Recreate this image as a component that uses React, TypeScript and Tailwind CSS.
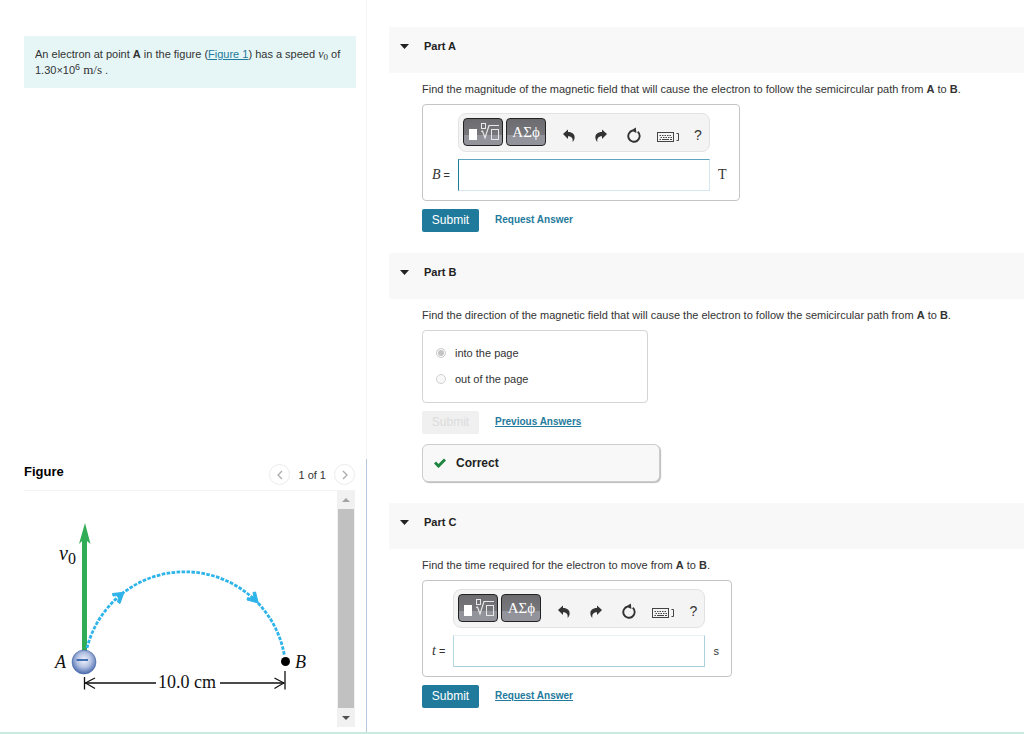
import type { ReactNode } from "react";

const serif = "font-['Liberation_Serif',serif]";

const UndoIcon = ({ flip = false }: { flip?: boolean }) => (
  <svg
    viewBox="0 0 12 13"
    className={flip ? "h-[13px] w-3 -scale-x-100" : "h-[13px] w-3"}
    fill="#333"
  >
    <path d="M0 5 L5 0.5 V3 C9.5 3 12 5.5 11.6 9 C11.4 10.8 10.6 12 9.6 13 C10.2 9.8 9 7.3 5 7.3 V10 Z" />
  </svg>
);

const ResetIcon = () => (
  <svg viewBox="0 0 14 16" className="h-4 w-[14px]">
    <path
      d="M9.6 4 A5.7 5.7 0 1 1 4.4 4"
      fill="none"
      stroke="#333"
      strokeWidth="1.9"
      transform="rotate(14 7 9)"
    />
    <path d="M4.2 3.6 L8.8 0.4 L9.4 6 Z" fill="#333" />
  </svg>
);

const KeyboardIcon = () => (
  <svg viewBox="0 0 24 12" className="h-3 w-6" fill="none" stroke="#444">
    <rect x="0.5" y="1.5" width="16" height="9" />
    <path d="M2.5 4.5 H15 M3.5 6.5 H15" strokeDasharray="1.5 1" />
    <path d="M2.5 8.5 H4 M5 8.5 H12 M13 8.5 H15" />
    <path d="M19.5 2.5 H21.5 V9.5 H19.5" />
  </svg>
);

const TemplateIcon = () => (
  <svg viewBox="0 0 32 20" className="h-5 w-8" fill="none" stroke="#e8e8e8">
    <rect x="2" y="7" width="8" height="11" fill="#fff" stroke="none" />
    <rect x="14.5" y="1.5" width="4" height="5" />
    <path d="M14 9.5 L15.5 9 L18 16 L22 3.5 H32" strokeWidth="1.2" />
    <rect x="24.5" y="7.5" width="7" height="10" />
  </svg>
);

const toolButton =
  "flex h-7 w-10 items-center justify-center rounded border border-[#222] bg-linear-to-b from-[#6c6c70] from-0% via-[#77777c] via-60% to-[#93939c] to-62% text-white";

const Toolbar = () => (
  <div className="flex h-[39px] items-start rounded-lg border border-[#e2e2e2] bg-[#f4f4f4] px-1 pt-1">
    <button aria-label="templates" className={toolButton}>
      <TemplateIcon />
    </button>
    <button className={`${toolButton} ${serif} ml-[3px] text-[15px] leading-none`}>
      ΑΣϕ
    </button>
    <div className="ml-[17px] flex h-7 items-center gap-5 pt-[6px]">
      <button aria-label="undo">
        <UndoIcon />
      </button>
      <button aria-label="redo">
        <UndoIcon flip />
      </button>
      <button aria-label="reset">
        <ResetIcon />
      </button>
    </div>
    <div className="ml-4 flex h-7 items-center gap-[13px] pt-[6px]">
      <button aria-label="keyboard shortcuts" className="pt-1">
        <KeyboardIcon />
      </button>
      <button className="text-sm leading-4 text-[#333]">?</button>
    </div>
  </div>
);

type PartProps = { title: string; prompt: ReactNode; children: ReactNode };

const Part = ({ title, prompt, children }: PartProps) => (
  <section className="mb-[21px]">
    <h2 className="flex h-[46px] items-start gap-[15px] bg-[#f8f8f8] px-[11px] pt-[11px] text-[11px] leading-4 font-bold text-[#222]">
      <svg viewBox="0 0 9 5" className="mt-[6px] h-[5px] w-[9px]" fill="#222">
        <path d="M0 0 H9 L4.5 5 Z" />
      </svg>
      {title}
    </h2>
    <div className="pt-2 pl-[33px]">
      <p className="mb-[7px] leading-4">{prompt}</p>
      {children}
    </div>
  </section>
);

type AnswerBoxProps = { id: string; name: string; unit: ReactNode; input: string };

const AnswerBox = ({ id, name, unit, input }: AnswerBoxProps) => (
  <div className="grid w-fit grid-cols-[auto_252px_auto] items-center gap-y-[7px] rounded border border-[#c4c4c4] pt-2 pr-3 pb-[9px] pl-[9px]">
    <div className="col-start-2">
      <Toolbar />
    </div>
    <label htmlFor={id} className="col-start-1 pr-2">
      <i className={`${serif} text-sm leading-4`}>{name}</i> =
    </label>
    <input id={id} className={`h-8 w-full border bg-white px-2 outline-none ${input}`} />
    <span className="pl-2">{unit}</span>
  </div>
);

type ActionsProps = { link: string; disabled?: boolean; underline?: boolean };

const Actions = ({ link, disabled = false, underline = true }: ActionsProps) => (
  <div className="mt-2 flex items-center gap-4">
    <button
      disabled={disabled}
      className="h-[23px] w-[57px] rounded-xs bg-[#1f7a9c] pb-[2px] text-xs leading-4 text-white disabled:bg-[#f0f0f0] disabled:text-[#dcdcdc]"
    >
      Submit
    </button>
    <a
      href="#"
      className={
        underline
          ? "pb-[2px] text-[10px] font-bold text-[#1f7a9c] underline"
          : "pb-[2px] text-[10px] font-bold text-[#1f7a9c]"
      }
    >
      {link}
    </a>
  </div>
);

const Diagram = () => (
  <svg viewBox="0 0 313 236" className="h-[236px] w-[313px]">
    <defs>
      <radialGradient id="electron" cx="0.5" cy="0.42" r="0.6">
        <stop offset="0" stopColor="#f2f5fc" />
        <stop offset="0.5" stopColor="#b3c1e2" />
        <stop offset="1" stopColor="#4163a8" />
      </radialGradient>
    </defs>
    <path d="M58 161 V50 L55 53 L61 32 L66.5 53 L63 50 V161 Z" fill="#2fac55" />
    <path
      d="M63 157 A101 101 0 0 1 260.5 165"
      fill="none"
      stroke="#2fb4e9"
      strokeWidth="2.8"
      strokeDasharray="3.6 1.4"
    />
    <g fill="#2fb4e9" stroke="#2fb4e9" strokeWidth="1">
      <path d="M100 101.3 L88.5 102.5 L89 105 L94 104.5 L94.5 107 L93.5 111 L96 112.5 Z" />
      <path d="M234.3 112 L231.5 101 L229 101.5 L230 106.5 L227.5 107.5 L223.5 106.5 L223 109 Z" />
    </g>
    <circle cx="60" cy="171" r="12" fill="url(#electron)" stroke="#4566a8" strokeWidth="0.6" />
    <path d="M52.5 169 H64" stroke="#2f63ad" strokeWidth="1.8" />
    <circle cx="261.5" cy="170.5" r="4.5" fill="#000" />
    <g fill="none" stroke="#111" strokeWidth="1.3">
      <path d="M60.5 186 V198.5 M261 180 V198.5" />
      <path d="M61 192 H132 M196 192 H260" />
      <path d="M71 187 Q65 190 61.5 192 Q65 194 71 197.5" />
      <path d="M250.5 187 Q256 190 260 192 Q256 194 250.5 197.5" />
    </g>
    <g className={serif} fill="#111" fontSize="18">
      <text x="35" y="69" fontStyle="italic" fontSize="20">v</text>
      <text x="44" y="73" fontSize="16">0</text>
      <text x="31" y="177" fontStyle="italic">A</text>
      <text x="271" y="177" fontStyle="italic">B</text>
      <text x="134" y="197">10.0 cm</text>
    </g>
  </svg>
);

const pager =
  "flex size-[21px] items-center justify-center rounded-full border border-[#ebebeb] text-[#aaa]";

const Chevron = ({ d }: { d: string }) => (
  <svg viewBox="0 0 6 10" className="h-[10px] w-[6px]" fill="none" stroke="currentColor" strokeWidth="1.3">
    <path d={d} />
  </svg>
);

const FigurePanel = () => (
  <div className="mt-auto border-r border-[#b4c8dc] pr-[11px] pb-[5px] pl-6">
    <div className="flex h-8 items-start border-b border-[#f3f3f3] pt-[5px]">
      <h2 className="text-[13px] leading-4 font-bold text-black">Figure</h2>
      <div className="ml-auto flex items-center gap-2">
        <button aria-label="previous" className={pager}>
          <Chevron d="M5 1 L1 5 L5 9" />
        </button>
        <span className="pt-[2px]">1 of 1</span>
        <button aria-label="next" className={pager}>
          <Chevron d="M1 1 L5 5 L1 9" />
        </button>
      </div>
    </div>
    <div className="flex">
      <div className="min-w-0 flex-1">
        <Diagram />
      </div>
      <div className="flex w-[18px] flex-col bg-[#f1f1f1]">
        <div className="flex h-[18px] items-center justify-center">
          <svg viewBox="0 0 8 4" className="h-1 w-2" fill="#a3a3a3">
            <path d="M0 4 L4 0 L8 4 Z" />
          </svg>
        </div>
        <div className="mx-px flex-1 bg-[#c1c1c1]" />
        <div className="flex h-[19px] items-center justify-center">
          <svg viewBox="0 0 8 4" className="h-1 w-2" fill="#505050">
            <path d="M0 0 L4 4 L8 0 Z" />
          </svg>
        </div>
      </div>
    </div>
  </div>
);

const App = () => {
  return (
    <div className="flex min-h-screen border-b-2 border-[#c9eadf] bg-white font-['Liberation_Sans',sans-serif] text-[11px] text-[#333]">
      <aside className="flex w-[367px] shrink-0 flex-col">
        <div className="flex-1 border-r border-[#f6f6f6] pt-9 pr-[10px] pl-6">
          <p className="bg-[#e6f6f7] px-[11px] py-[10px] leading-4">
            An electron at point <b>A</b> in the figure (
            <a href="#" className="text-[#1f7a9c] underline">
              Figure 1
            </a>
            ) has a speed{" "}
            <span className={serif}>
              <i className="text-xs leading-none">v</i>
              <sub className="text-[9px]">0</sub>
            </span>{" "}
            of 1.30×10
            <sup className="text-[9px]">6</sup>{" "}
            <span className={`${serif} text-[13px] leading-none`}>m/s</span> .
          </p>
        </div>
        <FigurePanel />
      </aside>
      <main className="min-w-0 flex-1 pt-[27px] pl-[22px]">
        <Part
          title="Part A"
          prompt={
            <>
              Find the magnitude of the magnetic field that will cause the
              electron to follow the semicircular path from <b>A</b> to <b>B</b>.
            </>
          }
        >
          <AnswerBox
            id="field"
            name="B"
            unit={<span className={`${serif} text-sm leading-4`}>T</span>}
            input="border-t-[#5fa5bf] border-r-[#d5e8ef] border-b-[#d5e8ef] border-l-[#1f7a9c]"
          />
          <Actions link="Request Answer" underline={false} />
        </Part>
        <Part
          title="Part B"
          prompt={
            <>
              Find the direction of the magnetic field that will cause the
              electron to follow the semicircular path from <b>A</b> to <b>B</b>.
            </>
          }
        >
          <div className="flex h-[73px] w-[226px] flex-col gap-[10px] rounded border border-[#d4d4d4] pt-[14px] pl-[13px]">
            {["into the page", "out of the page"].map((option, i) => (
              <label key={option} className="flex items-center gap-[9px] leading-4">
                <input
                  type="radio"
                  name="direction"
                  disabled
                  defaultChecked={i === 0}
                  className="size-[10px] appearance-none rounded-full border border-[#d0d0d0] bg-[#f8f8f8] checked:bg-[#c4c4c4] checked:shadow-[inset_0_0_0_1px_#fff]"
                />
                {option}
              </label>
            ))}
          </div>
          <Actions link="Previous Answers" disabled />
          <div className="mt-[10px] flex h-[38px] w-[238px] items-center gap-[10px] rounded-md border border-[#ccc] bg-[#f8f8f8] pl-[11px] text-xs font-bold text-[#222] shadow-[1px_1px_1px_#bbb]">
            <svg viewBox="0 0 12 10" className="h-[10px] w-3" fill="none" stroke="#1e8540" strokeWidth="3">
              <path d="M1 4.5 L4.5 8 L11 1.5" />
            </svg>
            Correct
          </div>
        </Part>
        <Part
          title="Part C"
          prompt={
            <>
              Find the time required for the electron to move from <b>A</b> to{" "}
              <b>B</b>.
            </>
          }
        >
          <AnswerBox
            id="time"
            name="t"
            unit="s"
            input="border-t-[#e8f2f5] border-r-[#a9d0dc] border-b-[#a9d0dc] border-l-[#b5d8e2]"
          />
          <Actions link="Request Answer" />
        </Part>
      </main>
    </div>
  );
};

export default App;
